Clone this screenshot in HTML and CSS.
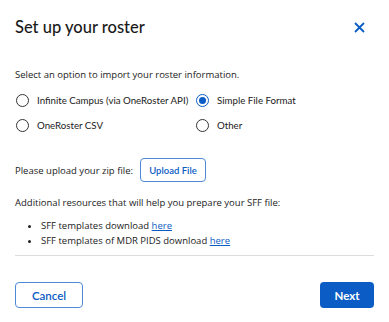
FILE: index.html
```html
<!DOCTYPE html>
<html lang="en">
<head>
    <meta charset="UTF-8">
    <meta name="viewport" content="width=device-width, initial-scale=1.0">
    <title>Set up your roster</title>
    <link rel="stylesheet" href="styles.css">
</head>
<body>
    <div class="modal">
        <div class="modal-header">
            <h1>Set up your roster</h1>
            <button class="close" aria-label="Close">
                <svg width="11" height="11" viewBox="0 0 11 11">
                    <path d="M1 1 L10 10 M10 1 L1 10" stroke="#0b5cc4" stroke-width="1.8" fill="none"/>
                </svg>
            </button>
        </div>

        <p class="intro">Select an option to import your roster information.</p>

        <div class="options">
            <label class="option"><span class="radio"></span>Infinite Campus (via OneRoster API)</label>
            <label class="option"><span class="radio checked"></span>Simple File Format</label>
            <label class="option"><span class="radio"></span>OneRoster CSV</label>
            <label class="option"><span class="radio"></span>Other</label>
        </div>

        <div class="upload">
            <span>Please upload your zip file:</span>
            <button class="btn-outline small">Upload File</button>
        </div>

        <p class="resources">Additional resources that will help you prepare your SFF file:</p>
        <ul class="links">
            <li>SFF templates download <a href="#">here</a></li>
            <li>SFF templates of MDR PIDS download <a href="#">here</a></li>
        </ul>

        <div class="footer">
            <button class="btn-outline">Cancel</button>
            <button class="btn-primary">Next</button>
        </div>
    </div>
</body>
</html>
```

FILE: styles.css
```css
body {
    margin: 0;
    background: #ffffff;
    font-family: "Open Sans", sans-serif;
    color: #222222;
}

.modal {
    width: 359px;
    padding: 0 15px;
}

.modal-header {
    display: flex;
    justify-content: space-between;
    align-items: center;
    height: 54px;
}

.modal-header h1 {
    margin: 0;
    font-family: "Lato", sans-serif;
    font-weight: 500;
    font-size: 16.5px;
    color: #1a1a1a;
}

.close {
    background: none;
    border: none;
    padding: 0;
    margin-right: 9px;
    display: flex;
    cursor: pointer;
}

.intro {
    margin: 13px 0 0;
    font-size: 9.5px;
    line-height: 16px;
}

.options {
    display: grid;
    grid-template-columns: 180px 1fr;
    row-gap: 9px;
    margin-top: 9px;
}

.option {
    display: flex;
    align-items: center;
    font-family: "Lato", sans-serif;
    font-size: 9.7px;
    height: 16px;
    white-space: nowrap;
    color: #1a1a1a;
}

.radio {
    flex-shrink: 0;
    width: 11px;
    height: 11px;
    border: 1.5px solid #333333;
    border-radius: 50%;
    margin: 0 8px 0 1px;
    position: relative;
}

.radio.checked {
    border-color: #0b5cc4;
}

.radio.checked::after {
    content: "";
    position: absolute;
    top: 2px;
    left: 2px;
    width: 7px;
    height: 7px;
    border-radius: 50%;
    background: #0b5cc4;
}

.upload {
    display: flex;
    align-items: center;
    gap: 7px;
    margin-top: 25px;
    font-size: 9.5px;
}

.btn-outline {
    background: #ffffff;
    border: 1.2px solid #4f8ad6;
    border-radius: 4px;
    color: #0b5cc4;
    font-family: "Lato", sans-serif;
    font-weight: 600;
    font-size: 11.5px;
    width: 68px;
    height: 26px;
    white-space: nowrap;
    cursor: pointer;
}

.btn-outline.small {
    width: 66px;
    height: 24px;
    font-size: 9.5px;
}

.resources {
    margin: 13px 0 0;
    font-size: 9.5px;
    line-height: 16px;
}

.links {
    margin: 7px 0 0;
    padding-left: 26px;
    font-size: 9.5px;
    line-height: 15px;
}

.links a {
    color: #0b5cc4;
}

.footer {
    display: flex;
    justify-content: space-between;
    margin-top: 7px;
    padding-top: 26px;
    border-top: 1px solid #dddddd;
}

.btn-primary {
    background: #0b5cc4;
    border: none;
    border-radius: 4px;
    color: #ffffff;
    font-family: "Lato", sans-serif;
    font-weight: 700;
    font-size: 11.5px;
    width: 54px;
    height: 26px;
    cursor: pointer;
}
```
